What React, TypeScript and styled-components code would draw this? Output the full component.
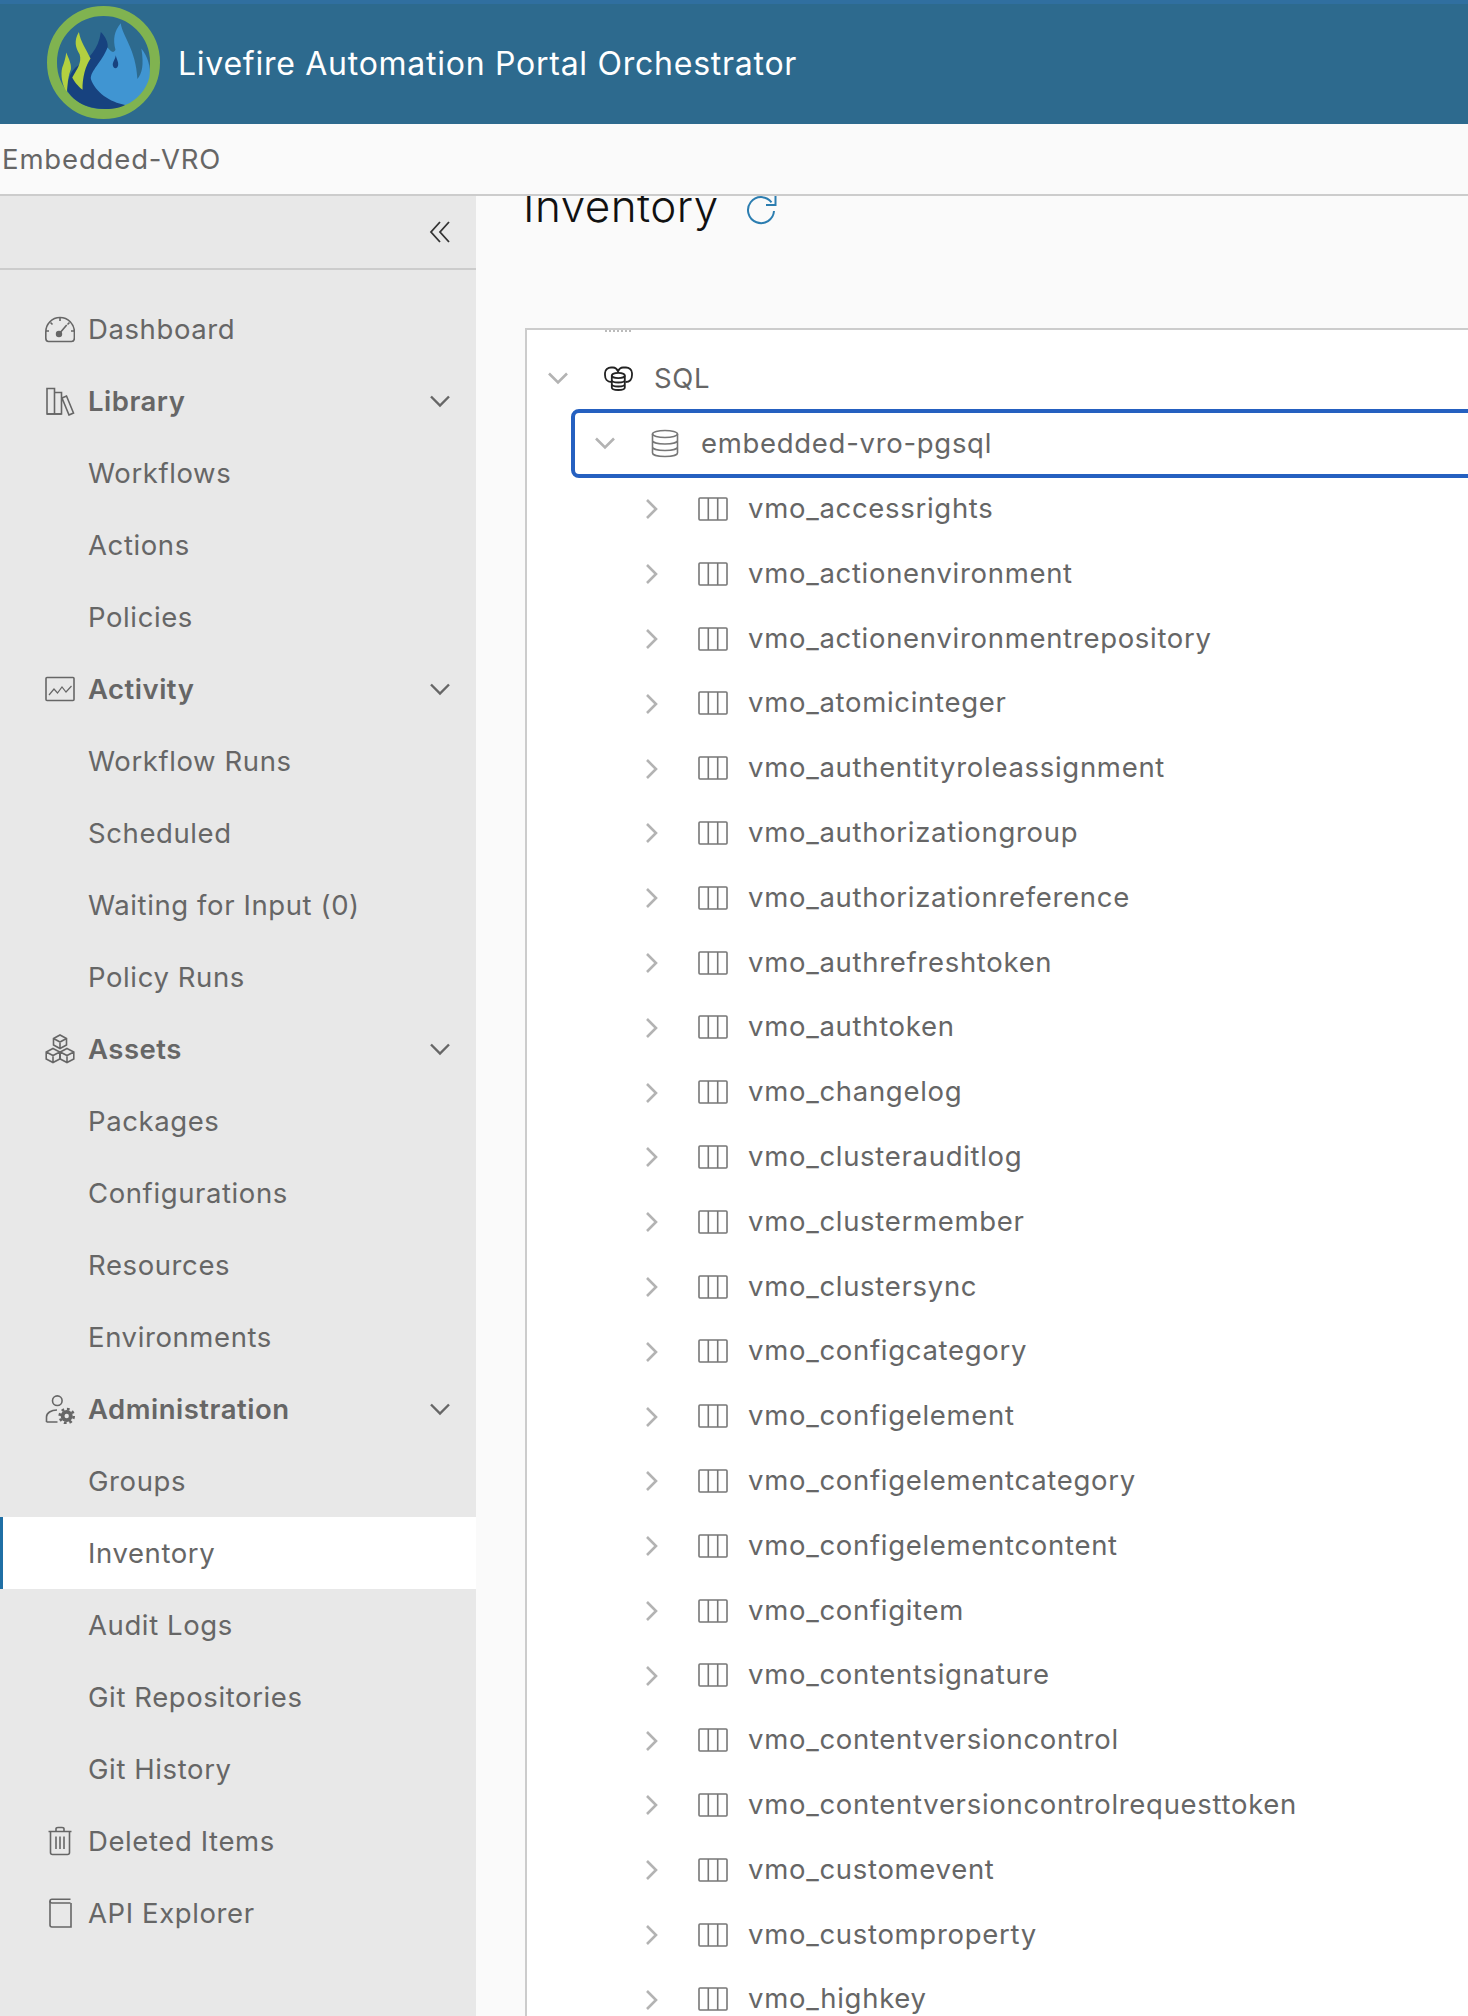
import React from 'react'
import styled, { createGlobalStyle } from 'styled-components'

const GlobalStyle = createGlobalStyle`
  html, body { margin: 0; padding: 0; background: #fafafa; }
  body { font-family: Inter, "Open Sans", "Liberation Sans", sans-serif; }
  * { box-sizing: border-box; }
`

const Page = styled.div`
  width: 1468px;
  height: 2016px;
  display: flex;
  flex-direction: column;
  overflow: hidden;
`

const Header = styled.header`
  height: 124px;
  flex-shrink: 0;
  background: #2d6a8e;
  border-top: 4px solid #306fa0;
  display: flex;
  align-items: center;
  padding-left: 47px;
  gap: 18px;
`

const BrandLogo = styled.svg`
  width: 113px;
  height: 113px;
  margin-top: -3px;
`

const BrandName = styled.span`
  color: #fff;
  font-size: 32px;
  letter-spacing: 0.74px;
  margin-top: -1px;
`

const SubBar = styled.div`
  height: 72px;
  flex-shrink: 0;
  background: #fafafa;
  border-bottom: 2px solid #ccc;
  display: flex;
  align-items: center;
  padding-left: 2px;
  color: #666;
  font-size: 27.5px;
  letter-spacing: 0.85px;
`

const Body = styled.div`
  flex: 1;
  display: flex;
  min-height: 0;
`

const Sidebar = styled.aside`
  width: 476px;
  flex-shrink: 0;
  background: #e8e8e8;
`

const CollapseRow = styled.div`
  height: 74px;
  border-bottom: 2px solid #ccc;
  display: flex;
  align-items: center;
  justify-content: flex-end;
  padding-right: 25px;
  color: #333;
`

const NavList = styled.nav`
  padding-top: 23px;
`

const NavRow = styled.div<{ $active?: boolean; $sub?: boolean; $bold?: boolean }>`
  height: 72px;
  display: flex;
  align-items: center;
  gap: 13px;
  padding-left: ${p => (p.$sub ? 88 : 45)}px;
  padding-right: 25px;
  font-size: 27.5px;
  font-weight: ${p => (p.$bold ? 600 : 400)};
  letter-spacing: ${p => (p.$bold ? 0.5 : 0.6)}px;
  color: #666;
  background: ${p => (p.$active ? '#fff' : 'transparent')};
  box-shadow: ${p => (p.$active ? 'inset 3px 0 0 #1f6fa5' : 'none')};
`

const NavIcon = styled.svg`
  width: 30px;
  height: 30px;
  flex-shrink: 0;
  color: #666;
  fill: none;
  stroke: currentColor;
  stroke-width: 1.6;
`

const NavChevron = styled.svg`
  width: 22px;
  height: 22px;
  margin-left: auto;
  color: #666;
  fill: none;
  stroke: currentColor;
  stroke-width: 2.4;
`

const CollapseChevron = styled(NavChevron)`
  color: #333;
  stroke-width: 1.8;
`

const Content = styled.main`
  flex: 1;
  min-width: 0;
  overflow: hidden;
  background: #fafafa;
  padding-left: 49px;
`

const TitleRow = styled.div`
  height: 56px;
  margin-top: -18px;
  margin-left: -2px;
  display: flex;
  align-items: center;
  gap: 26px;
`

const Title = styled.h1`
  margin: 0;
  font-size: 44px;
  font-weight: 300;
  letter-spacing: 0.47px;
  color: #111;
`

const RefreshIcon = styled.svg`
  width: 32px;
  height: 32px;
  margin-top: 6px;
  color: #2b7db0;
  fill: none;
  stroke: currentColor;
  stroke-width: 2;
`

const TreePanel = styled.section`
  position: relative;
  width: 1400px;
  margin-top: 94px;
  padding-top: 16px;
  background: #fff;
  border: 2px solid #ccc;
  border-right: 0;
  border-bottom: 0;

  &::before {
    content: '';
    position: absolute;
    top: 0;
    left: 78px;
    width: 26px;
    height: 2px;
    background: repeating-linear-gradient(90deg, #bbb 0 2px, transparent 2px 4px);
  }
`

const TreeRow = styled.div<{ $level: number; $selected?: boolean }>`
  height: 64.8px;
  display: flex;
  align-items: center;
  margin-left: ${p => (p.$selected ? 46 : 0)}px;
  padding-left: ${p => 20 + p.$level * 47 - (p.$selected ? 46 : 0)}px;
  font-size: 27.5px;
  letter-spacing: 0.7px;
  color: #666;
  border-radius: 6px;
  outline: ${p => (p.$selected ? '4px solid #2560c0' : 'none')};
  outline-offset: -2.5px;
`

const TreeChevron = styled.svg`
  width: 22px;
  height: 22px;
  flex-shrink: 0;
  fill: none;
  stroke: #b3b3b3;
  stroke-width: 2.6;
`

const TableChevron = styled(TreeChevron)`
  margin-left: -1px;
  margin-top: 3px;
`

const TreeIcon = styled.svg<{ $dark?: boolean }>`
  width: 30px;
  height: 30px;
  flex-shrink: 0;
  margin-left: 34px;
  margin-right: 21px;
  color: ${p => (p.$dark ? '#222' : '#777')};
  fill: none;
  stroke: currentColor;
  stroke-width: ${p => (p.$dark ? 1.8 : 1.6)};
`

const TableIcon = styled(TreeIcon)`
  margin-left: 36px;
  margin-right: 20px;
  margin-top: 2px;
`

function DownChevron() {
  return <path d="M2 6.5 L11 15.5 L20 6.5" />
}

function Logo() {
  return (
    <BrandLogo viewBox="50 20 340 340">
      <circle cx="220" cy="190" r="155" fill="none" stroke="#80b350" strokeWidth="30" />
      <path
        fill="#17427f"
        d="M212 98 C226 112 236 130 232 150 L285 318 C260 332 210 334 172 322 C150 314 125 300 110 272 C112 245 118 215 145 198 C175 180 205 150 212 98Z"
      />
      <path
        fill="#b3d040"
        d="M108 160 C116 180 124 195 122 210 C114 228 112 250 110 278 C96 262 90 225 96 205 C102 190 106 175 108 160Z"
      />
      <path
        fill="#b3d040"
        d="M146 98 C150 125 168 150 181 178 C166 200 156 235 157 272 C144 262 130 245 126 235 C140 210 156 190 148 165 C136 145 130 125 146 98Z"
      />
      <path
        fill="#4095d2"
        d="M272 72 C276 110 318 150 322 240 C336 222 342 200 334 148 C352 170 364 205 358 235 C350 270 320 305 285 318 C240 310 195 280 182 240 C180 215 215 190 232 145 C240 155 250 165 256 152 C248 120 252 95 272 72Z"
      />
      <path fill="#17427f" d="M257 168 C259 180 266 188 264 198 C262 210 250 210 248 198 C247 188 255 182 257 168Z" />
    </BrandLogo>
  )
}

const navIcons: { [key: string]: React.ReactNode } = {
  Dashboard: (
    <>
      <path d="M3.500 27.500 H26.500 C28.500 27.500 29.400 26 29.400 24 V18 C29.400 10 23 3.500 15 3.500 C7 3.500 0.800 10 0.800 18 V24 C0.800 26 1.800 27.500 3.500 27.500Z" />
      <path d="M15 3.500 V7 M5.500 8.500 L7.500 10.500 M24.500 8.500 L22.500 10.500 M1 17 H4 M26 17 H29 M14 20 L21.700 11" />
      <circle cx="14" cy="20" r="2.400" fill="currentColor" />
    </>
  ),
  Library: (
    <>
      <path d="M2 28 V2.500 H9.500 V28Z M9.500 28 V6.500 H16.500 V28Z M17 12 L21.500 10 L28.500 27 L24 29Z" />
      <path d="M2 28 H16.500" />
    </>
  ),
  Activity: (
    <>
      <rect x="1" y="3.500" width="28" height="23" rx="1" />
      <path d="M4 21 L9 15 L12.500 19 L17 13 L21 18 L26.500 12" strokeWidth="1.200" />
    </>
  ),
  Assets: (
    <>
      <path d="M15 1 L21.500 4.500 V11 L15 14.500 L8.500 11 V4.500Z M8.500 4.500 L15 8 L21.500 4.500 M15 8 V14.500" />
      <path d="M8 14.500 L14.800 18 V25 L8 28.500 L1.200 25 V18Z M1.200 18 L8 21.500 L14.800 18 M8 21.500 V28.500" />
      <path d="M22 14.500 L28.800 18 V25 L22 28.500 L15.200 25 V18Z M15.200 18 L22 21.500 L28.800 18 M22 21.500 V28.500" />
    </>
  ),
  Administration: (
    <>
      <circle cx="12.300" cy="6.700" r="4.800" />
      <path d="M1.500 28 V23 C1.500 19 6 16 12 16 M1.500 28 H12.500" />
      <circle cx="21.700" cy="22" r="6" fill="currentColor" stroke="none" />
      <circle cx="21.700" cy="22" r="7" fill="none" strokeWidth="2.600" strokeDasharray="2.700 2.800" />
      <circle cx="21.700" cy="22" r="2.200" fill="#e8e8e8" stroke="none" />
    </>
  ),
  'Deleted Items': (
    <>
      <path d="M3.500 5.500 H26.500 M5.500 5.500 V26.500 C5.500 27.500 6.500 28.500 7.500 28.500 H22.500 C23.500 28.500 24.500 27.500 24.500 26.500 V5.500" />
      <path d="M11 5.500 V2.800 C11 2 12 1.500 13 1.500 H17 C18 1.500 19 2 19 2.800 V5.500" />
      <path d="M11 10.500 V23 M15 10.500 V23 M19 10.500 V23" />
    </>
  ),
  'API Explorer': (
    <>
      <path d="M25.500 5 H7 C5.800 5 5 4 5 3 C5 2 5.800 1.200 7 1.200 H25.500" />
      <path d="M5 3 V27 C5 28 6 29 7 29 H26 V5" />
    </>
  ),
}

const navItems: { label: string; sub?: boolean; group?: boolean; active?: boolean }[] = [
  { label: 'Dashboard' },
  { label: 'Library', group: true },
  { label: 'Workflows', sub: true },
  { label: 'Actions', sub: true },
  { label: 'Policies', sub: true },
  { label: 'Activity', group: true },
  { label: 'Workflow Runs', sub: true },
  { label: 'Scheduled', sub: true },
  { label: 'Waiting for Input (0)', sub: true },
  { label: 'Policy Runs', sub: true },
  { label: 'Assets', group: true },
  { label: 'Packages', sub: true },
  { label: 'Configurations', sub: true },
  { label: 'Resources', sub: true },
  { label: 'Environments', sub: true },
  { label: 'Administration', group: true },
  { label: 'Groups', sub: true },
  { label: 'Inventory', sub: true, active: true },
  { label: 'Audit Logs', sub: true },
  { label: 'Git Repositories', sub: true },
  { label: 'Git History', sub: true },
  { label: 'Deleted Items' },
  { label: 'API Explorer' },
]

const tables = [
  'vmo_accessrights',
  'vmo_actionenvironment',
  'vmo_actionenvironmentrepository',
  'vmo_atomicinteger',
  'vmo_authentityroleassignment',
  'vmo_authorizationgroup',
  'vmo_authorizationreference',
  'vmo_authrefreshtoken',
  'vmo_authtoken',
  'vmo_changelog',
  'vmo_clusterauditlog',
  'vmo_clustermember',
  'vmo_clustersync',
  'vmo_configcategory',
  'vmo_configelement',
  'vmo_configelementcategory',
  'vmo_configelementcontent',
  'vmo_configitem',
  'vmo_contentsignature',
  'vmo_contentversioncontrol',
  'vmo_contentversioncontrolrequesttoken',
  'vmo_customevent',
  'vmo_customproperty',
  'vmo_highkey',
]

function App() {
  return (
    <Page>
      <GlobalStyle />
      <Header>
        <Logo />
        <BrandName>Livefire Automation Portal Orchestrator</BrandName>
      </Header>
      <SubBar>Embedded-VRO</SubBar>
      <Body>
        <Sidebar>
          <CollapseRow>
            <CollapseChevron viewBox="0 0 22 22">
              <path d="M11 1 L2 11 L11 21 M20 1 L11 11 L20 21" />
            </CollapseChevron>
          </CollapseRow>
          <NavList>
            {navItems.map(item => (
              <NavRow key={item.label} $sub={item.sub} $bold={item.group} $active={item.active}>
                {navIcons[item.label] && <NavIcon viewBox="0 0 30 30">{navIcons[item.label]}</NavIcon>}
                {item.label}
                {item.group && (
                  <NavChevron viewBox="0 0 22 22">
                    <DownChevron />
                  </NavChevron>
                )}
              </NavRow>
            ))}
          </NavList>
        </Sidebar>
        <Content>
          <TitleRow>
            <Title>Inventory</Title>
            <RefreshIcon viewBox="0 0 32 32">
              <path d="M26.500 9.400 A13 13 0 1 0 29 18" />
              <path d="M30.500 2 V12 H21" />
            </RefreshIcon>
          </TitleRow>
          <TreePanel>
            <TreeRow $level={0}>
              <TreeChevron viewBox="0 0 22 22">
                <DownChevron />
              </TreeChevron>
              <TreeIcon viewBox="0 0 30 30" $dark>
                <path d="M8.500 19 C4 19 2 16 2 12 V10 C2 6.500 5 4.500 8 4.500 H10 C12.500 4.500 14 6 15 8.500 C16 6 17.500 4.500 20 4.500 H23 C26 4.500 29 6.500 29 10 V12 C29 16 27 19 22.500 19" />
                <ellipse cx="15.300" cy="12.500" rx="6.500" ry="2.600" fill="#fff" />
                <path d="M8.800 12.500 V24.500 C8.800 26 11.500 27 15.300 27 C19 27 21.800 26 21.800 24.500 V12.500 M8.800 17 C8.800 18.500 11.500 19.500 15.300 19.500 C19 19.500 21.800 18.500 21.800 17 M8.800 21 C8.800 22.500 11.500 23.500 15.300 23.500 C19 23.500 21.800 22.500 21.800 21" />
              </TreeIcon>
              SQL
            </TreeRow>
            <TreeRow $level={1} $selected>
              <TreeChevron viewBox="0 0 22 22">
                <DownChevron />
              </TreeChevron>
              <TreeIcon viewBox="0 0 30 30">
                <ellipse cx="15" cy="6" rx="12.500" ry="3.500" />
                <path d="M2.500 6 V25 C2.500 27 8 28.500 15 28.500 C22 28.500 27.500 27 27.500 25 V6 M2.500 12.500 C2.500 14.500 8 16 15 16 C22 16 27.500 14.500 27.500 12.500 M2.500 19 C2.500 21 8 22.500 15 22.500 C22 22.500 27.500 21 27.500 19" />
              </TreeIcon>
              embedded-vro-pgsql
            </TreeRow>
            {tables.map(name => (
              <TreeRow key={name} $level={2}>
                <TableChevron viewBox="0 0 22 22">
                  <path d="M7 2 L16 11 L7 20" />
                </TableChevron>
                <TableIcon viewBox="0 0 30 30">
                  <rect x="1" y="4" width="28" height="22" rx="1" />
                  <path d="M10.300 4 V26 M19.700 4 V26" />
                </TableIcon>
                {name}
              </TreeRow>
            ))}
          </TreePanel>
        </Content>
      </Body>
    </Page>
  )
}

export default App
